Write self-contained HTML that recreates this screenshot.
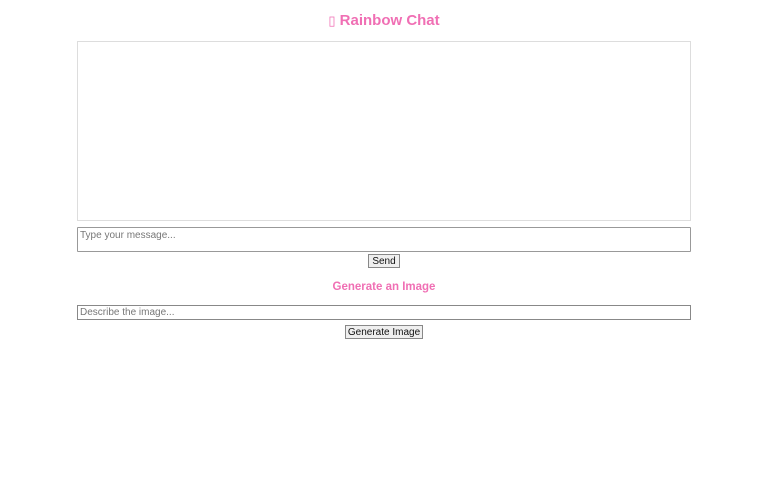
<!DOCTYPE html>
<html><head><style>
body{margin:0;width:768px;height:480px;background:#fff;font-family:"Liberation Sans",sans-serif;position:relative}
.a{position:absolute}
h1{position:absolute;left:0;width:768px;top:12px;margin:0;text-align:center;font-size:15px;color:#f06fb4;font-weight:bold}
.box{left:77px;top:41px;width:612px;height:178px;border:1px solid #ddd}
.ta{left:77px;top:227px;border:1px solid #999;border-radius:1px;font-size:10px;color:#777;padding:2px 0 0 2px;box-sizing:border-box;width:614px;height:25px}
.btn{border:1px solid #888;background:#efefef;font-size:10px;color:#111;text-align:center;box-sizing:border-box;line-height:14px}
h2{position:absolute;left:0;width:768px;top:281px;margin:0;text-align:center;font-size:11.5px;color:#f06fb4;font-weight:bold}
.in{left:77px;top:305px;width:614px;height:15px;border:1px solid #888;box-sizing:border-box;font-size:10px;color:#777;padding-left:2px;line-height:13px}
</style></head><body>
<h1><span style="font-weight:normal;font-size:13px">▯</span> Rainbow Chat</h1>
<div class="a box"></div>
<div class="a ta">Type your message...</div>
<div class="a btn" style="left:368px;top:254px;width:32px;height:14px">Send</div>
<h2>Generate an Image</h2>
<div class="a in">Describe the image...</div>
<div class="a btn" style="left:345px;top:325px;width:78px;height:14px">Generate Image</div>
</body></html>
